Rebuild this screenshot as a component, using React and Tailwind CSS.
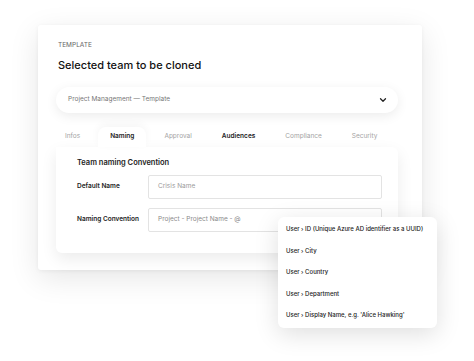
import { FiChevronDown } from 'react-icons/fi'

const TABS = [
  { label: 'Infos', tone: 'text-[#a3a3a3]' },
  { label: 'Naming', tone: 'text-[#222] font-semibold', active: true },
  { label: 'Approval', tone: 'text-[#a3a3a3]' },
  { label: 'Audiences', tone: 'text-[#222] font-semibold' },
  { label: 'Compliance', tone: 'text-[#a3a3a3]' },
  { label: 'Security', tone: 'text-[#a3a3a3]' },
]

const OPTIONS = [
  'User › ID (Unique Azure AD identifier as a UUID)',
  'User › City',
  'User › Country',
  'User › Department',
  "User › Display Name, e.g. 'Alice Hawking'",
]

export default function App() {
  return (
    <div className="relative h-[361px] w-[474px] overflow-hidden bg-white pl-[38px] pt-[25px] font-['Inter',sans-serif]">
      <div className="h-[245px] w-[384px] rounded-[3px] bg-white pl-[18px] pr-[24px] pt-[16px] shadow-[0_8px_30px_rgba(0,0,0,0.10),0_1px_4px_rgba(0,0,0,0.05)]">
        <p className="pl-[2px] text-[6.5px] uppercase leading-[8px] text-[#666]">Template</p>
        <h1 className="mt-[10px] pl-[2px] text-[11px] font-medium leading-[13px] text-[#111]">
          Selected team to be cloned
        </h1>

        <div className="mt-[15px] flex h-[26px] items-center justify-between rounded-full bg-white pl-[12px] pr-[10px] shadow-[0_3px_12px_rgba(0,0,0,0.08)]">
          <span className="text-[6.5px] text-[#777]">Project Management — Template</span>
          <FiChevronDown className="text-[10px] text-[#222]" strokeWidth={3} />
        </div>

        <div className="ml-[-3px] mt-[14px] flex h-[20px] items-stretch gap-[6px]">
          {TABS.map((t) => (
            <div
              key={t.label}
              className={`flex items-center px-[12px] text-[6.5px] ${t.tone} ${
                t.active ? 'rounded-t-[8px] bg-white shadow-[0_-3px_8px_rgba(0,0,0,0.04)]' : ''
              }`}
            >
              {t.label}
            </div>
          ))}
        </div>

        <div className="h-[106px] rounded-b-[6px] rounded-tr-[6px] bg-white pl-[21px] pr-[16px] pt-[11px] shadow-[0_6px_16px_rgba(0,0,0,0.08)]">
          <p className="text-[7.5px] font-semibold leading-[10px] text-[#222]">Team naming Convention</p>
          <div className="mt-[7px] flex items-center">
            <span className="w-[71px] shrink-0 text-[6.5px] font-semibold text-[#222]">Default Name</span>
            <div className="flex h-[24px] w-[234px] items-center rounded-[2px] border border-[#e3e3e3] pl-[9px] text-[6.5px] text-[#9a9a9a]">
              Crisis Name
            </div>
          </div>
          <div className="mt-[9px] flex items-center">
            <span className="w-[71px] shrink-0 text-[6.5px] font-semibold text-[#222]">Naming Convention</span>
            <div className="flex h-[24px] w-[234px] items-center rounded-[2px] border border-[#e3e3e3] pl-[9px] text-[6.5px] text-[#8a8a8a]">
              Project - Project Name - @
            </div>
          </div>
        </div>
      </div>

      <div className="absolute left-[278px] top-[217px] flex w-[159px] flex-col gap-[13px] rounded-[6px] bg-white py-[8px] pl-[8px] shadow-[0_6px_24px_rgba(0,0,0,0.13)]">
        {OPTIONS.map((o) => (
          <p key={o} className="text-[6px] font-medium leading-[8.5px] text-[#222]">
            {o}
          </p>
        ))}
      </div>
    </div>
  )
}
